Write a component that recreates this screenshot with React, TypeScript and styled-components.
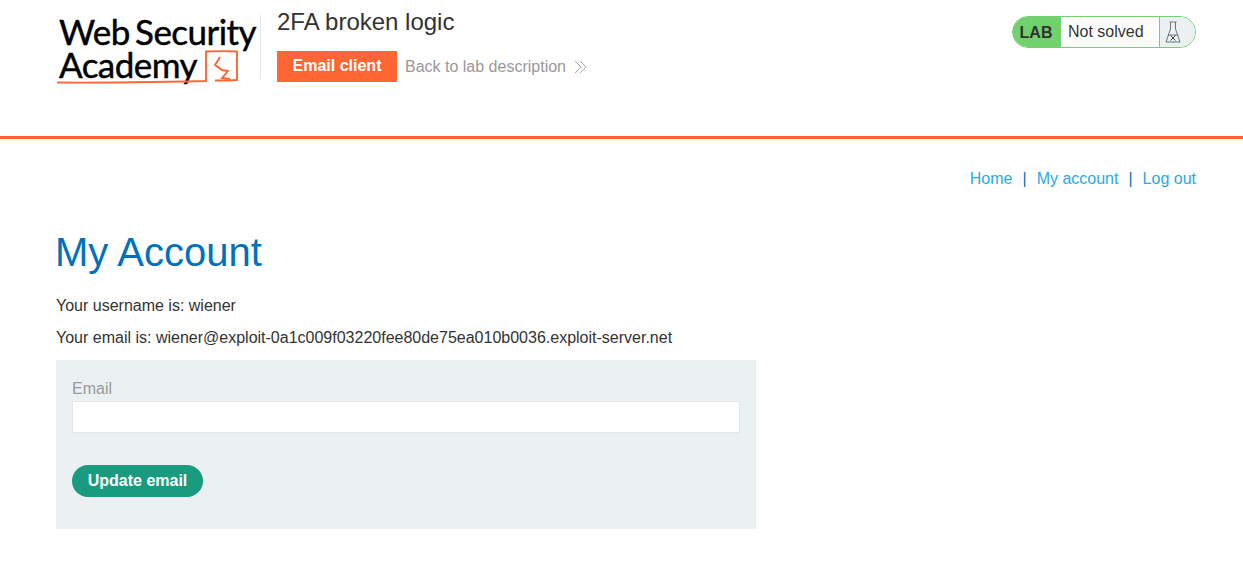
import React from "react";
import styled, { createGlobalStyle } from "styled-components";

const Global = createGlobalStyle`
  html, body { margin: 0; padding: 0; background: #fff; }
  body { font-family: "Liberation Sans", Arial, sans-serif; font-size: 16px; color: #333332; line-height: 1.4; }
`;
const Header = styled.header`
  height: 136px; border-bottom: 3px solid #ff6633; box-sizing: content-box;
  padding: 0 47px 0 56px; display: flex; align-items: flex-start;
`;
const LogoWrap = styled.div`
  display: flex; align-items: flex-start; flex: none; margin-top: 9px; height: 80px;
`;
const LogoMark = styled.div`
  position: relative; width: 204px; height: 80px; padding: 6px 0 0 3px; box-sizing: border-box; white-space: nowrap;
  font-family: Lato, sans-serif; font-size: 35px; line-height: 33px; color: #000;
  letter-spacing: -0.55px; word-spacing: -3px; -webkit-text-stroke: 0.45px #000;
`;
const LogoLine = styled.div`
  height: 33px;
`;
const LogoArt = styled.svg`
  position: absolute; left: 0; top: 0;
`;
const Divider = styled.div`
  width: 1px; height: 63px; margin-top: 6px; background: #e6e6e6;
`;
const TitleBlock = styled.div`
  margin-left: 16px; padding-top: 8px; flex: 1;
`;
const Title = styled.h2`
  margin: 0; font-size: 24px; font-weight: 400; line-height: 28px; color: #333332;
`;
const ActionRow = styled.div`
  display: flex; align-items: center; margin-top: 15px;
`;
const EmailButton = styled.a`
  width: 120px; height: 31px; background: #ff6633; color: #fff; font-weight: 700; font-size: 16px;
  display: flex; align-items: center; justify-content: center;
`;
const BackLink = styled.a`
  margin-left: 8px; padding-top: 2px; color: #999; display: flex; align-items: center; gap: 8px; font-size: 16px;
`;
const Badge = styled.div`
  margin-top: 16px; width: 184px; height: 32px; box-sizing: border-box; border: 1px solid #70d16d; border-radius: 16px;
  display: flex; overflow: hidden; flex: none;
`;
const BadgeLab = styled.span`
  width: 48px; padding-right: 2px; background: #70d16d; font-weight: 700; font-size: 16px; text-align: center; line-height: 31px; box-sizing: border-box; color: #333332;
`;
const BadgeStatus = styled.span`
  width: 98px; padding-left: 7px; box-sizing: border-box; line-height: 29px; background: #fff; font-size: 16px;
`;
const BadgeIcon = styled.span`
  flex: 1; background: #ebf0f2; border-left: 1px solid #70d16d; display: flex; align-items: center; padding-left: 3px;
`;
const Main = styled.main`
  padding: 29px 47px 0 56px;
`;
const Nav = styled.nav`
  display: flex; justify-content: flex-end; color: #0071bc; line-height: 22px;
`;
const NavLink = styled.a`
  color: #29abe2;
`;
const Sep = styled.span`
  margin: 0 10px; color: #0071bc;
`;
const Heading = styled.h1`
  margin: 39px 0 0 -1px; font-size: 40px; font-weight: 400; line-height: 46px; color: #0071bc;
`;
const Para = styled.p<{ $top: number }>`
  margin: 0; line-height: 22px;
  margin-top: ${(p) => p.$top}px;
`;
const Panel = styled.form`
  margin-top: 11px; width: 700px; height: 169px; box-sizing: border-box; background: #ebf0f2; padding: 19px 16px 0;
`;
const Label = styled.label`
  display: block; color: #999; line-height: 20px; font-size: 16px; margin-bottom: 2px;
`;
const Input = styled.input`
  display: block; width: 100%; height: 32px; box-sizing: border-box; background: #fff; border: 1px solid #e6e6e6; margin: 0;
`;
const Submit = styled.button`
  display: block; margin-top: 32px; height: 32px; width: 131px; border: 0; border-radius: 16px; background: #189b7e; color: #fff;
  font: 700 16px "Liberation Sans", Arial, sans-serif; padding: 0;
`;

function Logo() {
  return (
    <LogoMark>
      <LogoLine>Web Security</LogoLine>
      <LogoLine>Academy</LogoLine>
      <LogoArt width="204" height="80" viewBox="0 0 204 80">
        <path d="M1 73.5 C45 74 100 73 150 72 V42.5 C160 42 172 42 181 42.5 L181 71 C173 71.5 166 71.5 159 71.5" fill="none" stroke="#ff6633" strokeWidth="1.9" />
        <path d="M164 48 L159 56 L166 61 L172 62 L166 69 L174 70" fill="none" stroke="#ff6633" strokeWidth="1.9" />
      </LogoArt>
    </LogoMark>
  );
}

function Flask() {
  return (
    <svg width="24" height="26" viewBox="0 0 24 26">
      <path d="M6.5 3 H13.5 M7.5 3 V10 L3 23 H17 L12.5 10 V3 M5 16 H15" fill="none" stroke="#666" strokeWidth="0.9" />
      <path d="M7.5 16.5 L12.5 21.5 M12.5 16.5 L7.5 21.5" fill="none" stroke="#444" strokeWidth="1" />
    </svg>
  );
}

export default function App() {
  return (
    <>
      <Global />
      <Header>
        <LogoWrap>
          <Logo />
          <Divider />
        </LogoWrap>
        <TitleBlock>
          <Title>2FA broken logic</Title>
          <ActionRow>
            <EmailButton>Email client</EmailButton>
            <BackLink>
              Back to lab description
              <svg width="13" height="14" viewBox="0 0 13 14">
                <path d="M1 1 L7 7 L1 13 M6 1 L12 7 L6 13" fill="none" stroke="#aaa" strokeWidth="1" />
              </svg>
            </BackLink>
          </ActionRow>
        </TitleBlock>
        <Badge>
          <BadgeLab>LAB</BadgeLab>
          <BadgeStatus>Not solved</BadgeStatus>
          <BadgeIcon><Flask /></BadgeIcon>
        </Badge>
      </Header>
      <Main>
        <Nav>
          <NavLink>Home</NavLink><Sep>|</Sep>
          <NavLink>My account</NavLink><Sep>|</Sep>
          <NavLink>Log out</NavLink>
        </Nav>
        <Heading>My Account</Heading>
        <Para $top={20}>Your username is: wiener</Para>
        <Para $top={10}>Your email is: wiener@exploit-0a1c009f03220fee80de75ea010b0036.exploit-server.net</Para>
        <Panel>
          <Label>Email</Label>
          <Input />
          <Submit type="button">Update email</Submit>
        </Panel>
      </Main>
    </>
  );
}
